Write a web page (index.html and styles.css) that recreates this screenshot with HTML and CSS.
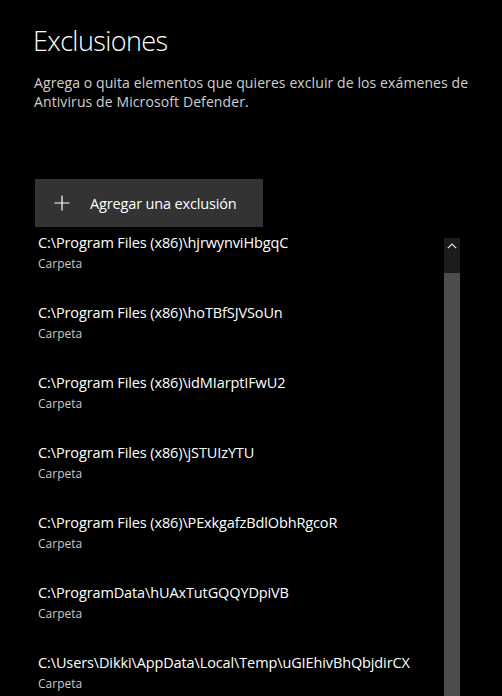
FILE: index.html
```html
<!DOCTYPE html>
<html lang="es">
<head>
<meta charset="utf-8">
<link rel="stylesheet" href="styles.css">
</head>
<body>
<main class="page">
  <h1 class="title">Exclusiones</h1>
  <p class="desc">Agrega o quita elementos que quieres excluir de los exámenes de Antivirus de Microsoft Defender.</p>
  <button class="add-btn">
    <svg class="plus" width="16" height="16" viewBox="0 0 16 16"><path d="M8 0.5V15.5M0.5 8H15.5" stroke="#fff" stroke-width="1.2" fill="none"/></svg>
    <span>Agregar una exclusión</span>
  </button>
  <section class="list-wrap">
    <ul class="list">
      <li class="item"><div class="path">C:\Program Files (x86)\hjrwynviHbgqC</div><div class="kind">Carpeta</div></li>
      <li class="item"><div class="path">C:\Program Files (x86)\hoTBfSJVSoUn</div><div class="kind">Carpeta</div></li>
      <li class="item"><div class="path">C:\Program Files (x86)\idMIarptIFwU2</div><div class="kind">Carpeta</div></li>
      <li class="item"><div class="path">C:\Program Files (x86)\jSTUIzYTU</div><div class="kind">Carpeta</div></li>
      <li class="item"><div class="path">C:\Program Files (x86)\PExkgafzBdlObhRgcoR</div><div class="kind">Carpeta</div></li>
      <li class="item"><div class="path">C:\ProgramData\hUAxTutGQQYDpiVB</div><div class="kind">Carpeta</div></li>
      <li class="item"><div class="path">C:\Users\Dikki\AppData\Local\Temp\uGIEhivBhQbjdirCX</div><div class="kind">Carpeta</div></li>
    </ul>
    <div class="scrollbar">
      <div class="sb-arrow">
        <svg width="10" height="6" viewBox="0 0 10 6"><path d="M0.8 5.2L5 1L9.2 5.2" stroke="#e6e6e6" stroke-width="1.2" fill="none"/></svg>
      </div>
      <div class="sb-thumb"></div>
    </div>
  </section>
</main>
</body>
</html>
```
FILE: styles.css
```css
html, body {
  margin: 0;
  padding: 0;
  background: #000;
  height: 100%;
  overflow: hidden;
}
.page {
  font-family: "Open Sans", "Noto Sans", sans-serif;
  color: #fff;
  padding: 23px 0 0 33px;
  box-sizing: border-box;
  height: 696px;
  display: flex;
  flex-direction: column;
}
.title {
  margin: 0;
  font-weight: 300;
  font-size: 27px;
  line-height: 36px;
  letter-spacing: -0.6px;
}
.desc {
  margin: 14px 0 0 1px;
  font-size: 14px;
  line-height: 19px;
  color: #d0d0d0;
  width: 450px;
  letter-spacing: 0.1px;
}
.add-btn {
  margin: 68px 0 0 2px;
  width: 228px;
  height: 48px;
  background: #333;
  border: none;
  padding: 0 0 0 19px;
  display: flex;
  align-items: center;
  gap: 20px;
  font-family: inherit;
  color: #fff;
  font-size: 14.5px;
  letter-spacing: -0.15px;
  cursor: pointer;
}
.plus { flex: none; }
.list-wrap {
  display: flex;
  flex: 1;
  min-height: 0;
  width: 425px;
  margin-left: 2px;
}
.list {
  list-style: none;
  margin: 0;
  padding: 0;
  flex: 1;
}
.item {
  height: 70px;
  padding: 6px 0 0 3px;
  box-sizing: border-box;
}
.path {
  font-size: 14.5px;
  line-height: 20px;
  letter-spacing: -0.12px;
}
.kind {
  font-size: 12px;
  line-height: 16px;
  color: #c8c8c8;
  margin-top: 3px;
}
.scrollbar {
  width: 16px;
  margin-top: 11px;
  display: flex;
  flex-direction: column;
}
.sb-arrow {
  height: 35px;
  background: #1c1c1c;
  display: flex;
  justify-content: center;
  padding-top: 5px;
  box-sizing: border-box;
}
.sb-thumb {
  flex: 1;
  background: #4d4d4d;
}
```
